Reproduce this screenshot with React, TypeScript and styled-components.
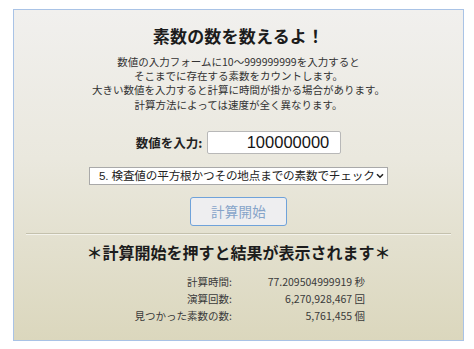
import React from "react";
import styled, { createGlobalStyle } from "styled-components";

const Global = createGlobalStyle`
  html, body { margin: 0; padding: 0; background: #ffffff; }
  body { font-family: "Noto Sans CJK JP", "Noto Sans", sans-serif; }
  * { box-sizing: border-box; }
`;

const Page = styled.div`
  padding: 9px 0 0 13px;
`;

const Panel = styled.div`
  width: 451px;
  height: 332px;
  border: 1px solid #a9c3e6;
  background: linear-gradient(to bottom, #f1f0ee 0%, #eae8de 45%, #dbd7bd 100%);
  display: flex;
  flex-direction: column;
  align-items: center;
  padding-top: 13px;
`;

const Title = styled.h1`
  margin: 0;
  font-size: 17px;
  line-height: 26px;
  font-weight: 700;
  color: #1c1c1c;
  letter-spacing: 0.2px;
`;

const Intro = styled.p`
  margin: 6px 0 0;
  font-size: 10.5px;
  line-height: 14.2px;
  color: #333333;
  text-align: center;
`;

const InputRow = styled.div`
  display: flex;
  align-items: center;
  gap: 5px;
  margin-top: 19px;
`;

const Label = styled.label`
  font-size: 12.5px;
  font-weight: 700;
  color: #222222;
`;

const NumberInput = styled.input`
  width: 134px;
  height: 23px;
  border: 1px solid #b8b8b8;
  border-radius: 2px;
  background: #ffffff;
  font-family: "Liberation Sans", Arial, sans-serif;
  font-size: 16.5px;
  color: #151515;
  text-align: right;
  padding: 0 11px 0 4px;
  outline: none;
`;

const SelectWrap = styled.div`
  position: relative;
  margin-top: 13px;
  width: 299px;
  height: 18px;
`;

const Select = styled.select`
  display: block;
  appearance: none;
  -webkit-appearance: none;
  width: 100%;
  height: 100%;
  margin: 0;
  border: 1px solid #a9a9a9;
  border-radius: 0;
  background: #ffffff;
  font-family: "Liberation Sans", "Noto Sans CJK JP", sans-serif;
  font-size: 11.6px;
  letter-spacing: -0.15px;
  color: #222222;
  padding: 0 10px 0 9px;
  line-height: 16px;
  outline: none;
`;

const Chevron = styled.svg`
  position: absolute;
  right: 4px;
  top: 6px;
  pointer-events: none;
`;

const StartButton = styled.button`
  margin-top: 12px;
  width: 97px;
  height: 29px;
  border: 1.5px solid #6fa2da;
  border-radius: 3px;
  background: #eeeef0;
  color: #86a4c9;
  font-family: "Noto Sans CJK JP", sans-serif;
  font-size: 13.5px;
  letter-spacing: 0.3px;
`;

const Divider = styled.hr`
  align-self: stretch;
  margin: 7px 12px 0;
  border: none;
  border-top: 1px solid #c4c1ad;
  border-bottom: 1px solid #f4f3ec;
  height: 0;
`;

const ResultHeading = styled.h2`
  margin: 5px 0 0;
  font-size: 16px;
  line-height: 24px;
  font-weight: 700;
  color: #1c1c1c;
`;

const Results = styled.div`
  align-self: flex-start;
  margin: 9px 0 0 98px;
  display: grid;
  grid-template-columns: 120px 133px;
  font-size: 10.5px;
  line-height: 17.3px;
  color: #3a3a3a;
`;

const Key = styled.div`
  text-align: right;
`;

const Value = styled.div`
  text-align: right;
`;

const rows: [string, string][] = [
  ["計算時間:", "77.209504999919 秒"],
  ["演算回数:", "6,270,928,467 回"],
  ["見つかった素数の数:", "5,761,455 個"],
];

export default function App() {
  return (
    <>
      <Global />
      <Page>
        <Panel>
          <Title>素数の数を数えるよ！</Title>
          <Intro>
            数値の入力フォームに10～999999999を入力すると
            <br />
            そこまでに存在する素数をカウントします。
            <br />
            大きい数値を入力すると計算に時間が掛かる場合があります。
            <br />
            計算方法によっては速度が全く異なります。
          </Intro>
          <InputRow>
            <Label htmlFor="num">数値を入力:</Label>
            <NumberInput id="num" defaultValue="100000000" />
          </InputRow>
          <SelectWrap>
            <Select defaultValue="5">
              <option value="5">5. 検査値の平方根かつその地点までの素数でチェック</option>
            </Select>
            <Chevron width="8" height="6" viewBox="0 0 8 6">
              <path d="M1 1.2 L4 4.2 L7 1.2" fill="none" stroke="#222" strokeWidth="1.6" />
            </Chevron>
          </SelectWrap>
          <StartButton>計算開始</StartButton>
          <Divider />
          <ResultHeading>＊計算開始を押すと結果が表示されます＊</ResultHeading>
          <Results>
            {rows.map(([k, v]) => (
              <React.Fragment key={k}>
                <Key>{k}</Key>
                <Value>{v}</Value>
              </React.Fragment>
            ))}
          </Results>
        </Panel>
      </Page>
    </>
  );
}
